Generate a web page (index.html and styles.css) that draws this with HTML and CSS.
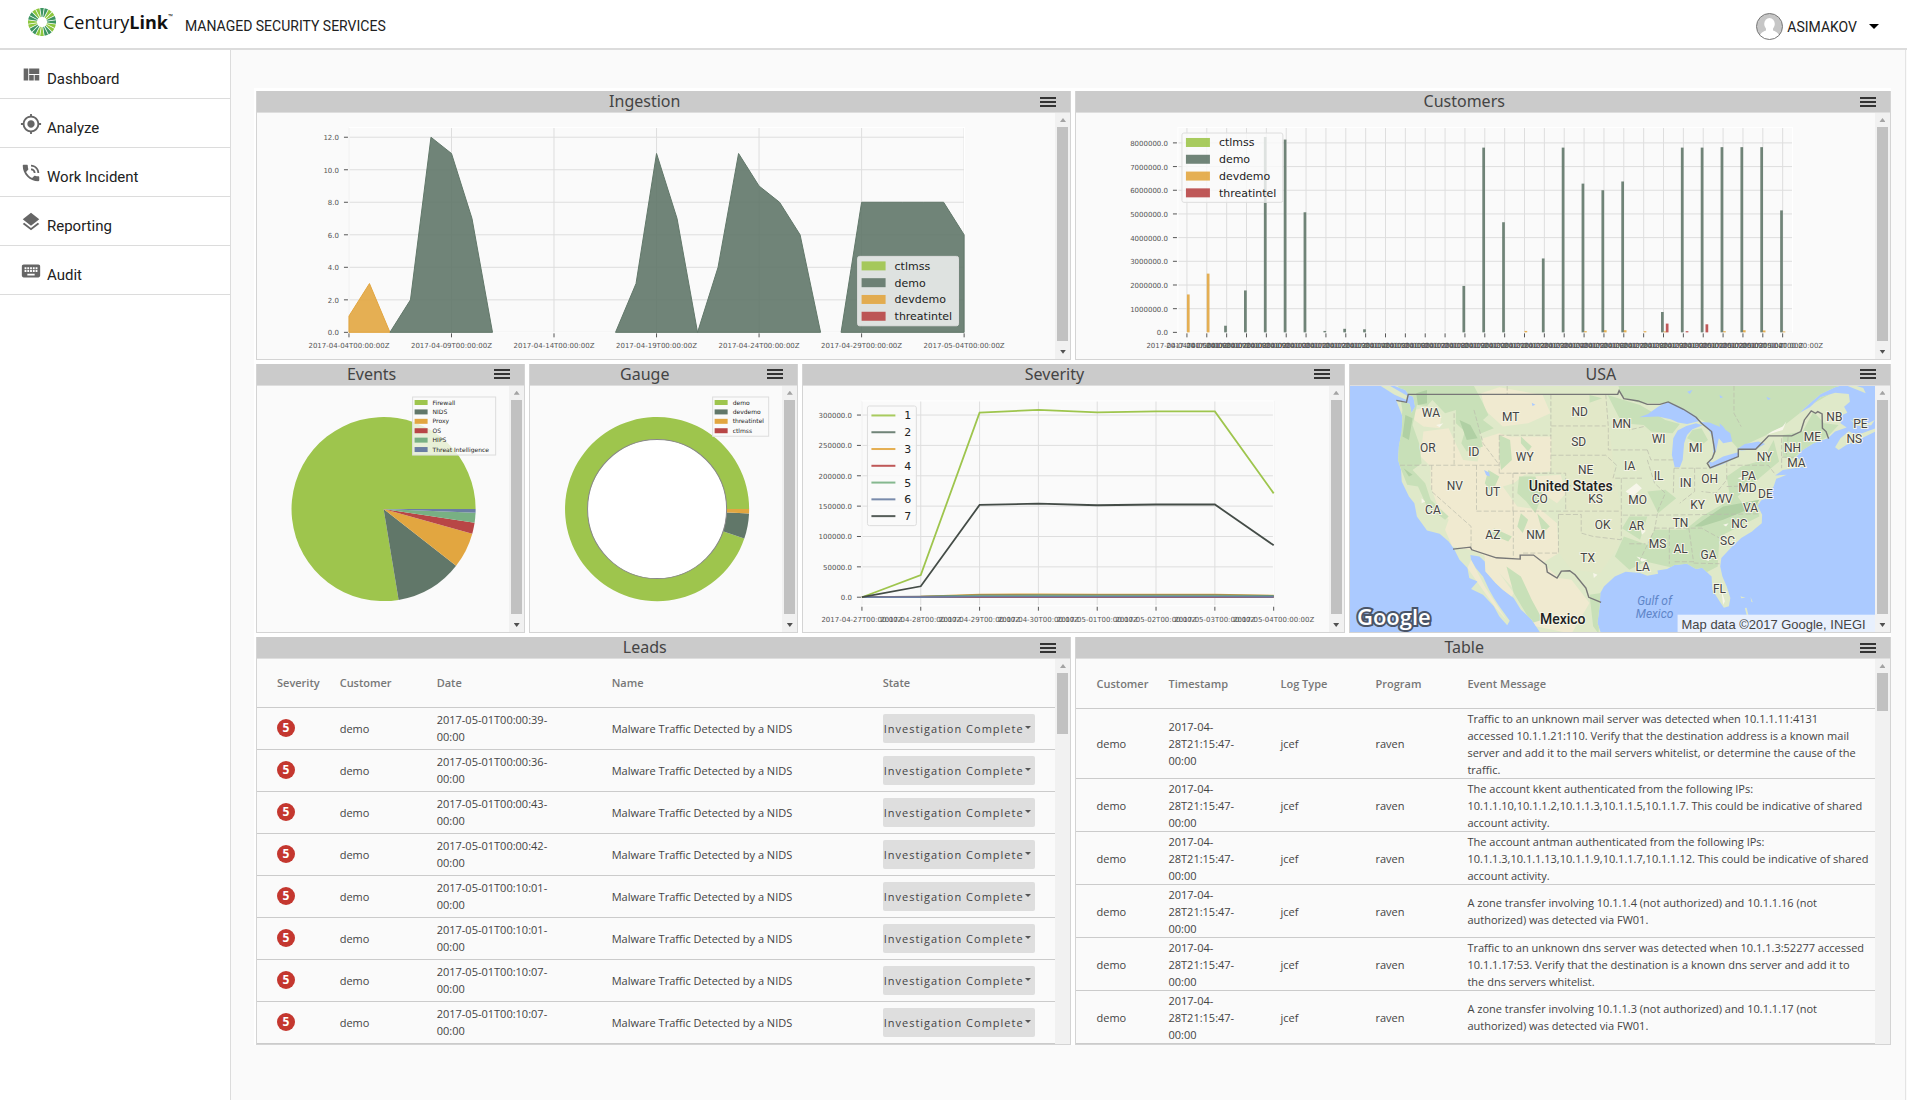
FILE: index.html
```html
<!DOCTYPE html>
<html lang="en">
<head>
  <meta charset="UTF-8">
  <meta name="viewport" content="width=device-width, initial-scale=1.0">
  <title>Managed Security Services</title>
  <link rel="stylesheet" href="styles.css">
</head>
<body>
  <!-- Header -->
  <header class="topbar">
    <a class="brand" href="#">
      <svg class="brand-logo" id="logo" viewBox="0 0 30 30" aria-hidden="true"></svg>
      <span class="brand-name">Century<b>Link</b></span><span class="brand-tm">™</span>
    </a>
    <span class="brand-sub">MANAGED SECURITY SERVICES</span>
    <button class="user" type="button">
      <svg class="avatar" viewBox="0 0 27 27" aria-hidden="true">
        <clipPath id="face"><circle cx="13.5" cy="13.5" r="13"/></clipPath>
        <circle cx="13.5" cy="13.5" r="13" fill="#c6c6c6"/>
        <g clip-path="url(#face)" fill="#fff">
          <ellipse cx="13.5" cy="11" rx="5.3" ry="6"/>
          <path d="M3 27c0-6 3-8 7-9.500v-4h7v4c4 1.500 7 3.500 7 9.500z"/>
        </g>
        <circle cx="13.500" cy="13.500" r="13" fill="none" stroke="#777"/>
      </svg>
      <span>ASIMAKOV</span>
      <svg class="caret" viewBox="0 0 10 5" aria-hidden="true"><path d="M0 0h10L5 5z"/></svg>
    </button>
  </header>

  <div class="page">
    <!-- Sidebar -->
    <nav class="sidebar">
      <a href="#"><svg viewBox="0 0 24 24"><path d="M10 18h5v-6h-5v6zm-6 0h5V5H4v13zm12 0h5v-6h-5v6zM10 5v6h11V5H10z"/></svg><span>Dashboard</span></a>
      <a href="#"><svg viewBox="0 0 24 24"><path d="M12 8c-2.210 0-4 1.790-4 4s1.790 4 4 4 4-1.790 4-4-1.790-4-4-4zm8.940 3c-.46-4.170-3.770-7.480-7.940-7.940V1h-2v2.060C6.830 3.520 3.520 6.830 3.060 11H1v2h2.060c.46 4.170 3.770 7.480 7.940 7.940V23h2v-2.060c4.170-.46 7.480-3.770 7.940-7.940H23v-2h-2.060zM12 19c-3.870 0-7-3.130-7-7s3.130-7 7-7 7 3.130 7 7-3.130 7-7 7z"/></svg><span>Analyze</span></a>
      <a href="#"><svg viewBox="0 0 24 24"><path d="M20 15.500c-1.250 0-2.450-.2-3.570-.57-.35-.11-.74-.03-1.020.24l-2.200 2.200c-2.830-1.440-5.150-3.750-6.590-6.590l2.200-2.200c.28-.28.36-.67.25-1.020C8.700 6.450 8.500 5.250 8.500 4c0-.55-.45-1-1-1H4c-.55 0-1 .45-1 1 0 9.390 7.610 17 17 17 .55 0 1-.45 1-1v-3.500c0-.55-.45-1-1-1zM19 12h2c0-4.970-4.030-9-9-9v2c3.870 0 7 3.130 7 7zm-4 0h2c0-2.760-2.240-5-5-5v2c1.660 0 3 1.340 3 3z"/></svg><span>Work Incident</span></a>
      <a href="#"><svg viewBox="0 0 24 24"><path d="M11.990 18.540l-7.370-5.730L3 14.070l9 7 9-7-1.630-1.270-7.380 5.740zM12 16l7.360-5.730L21 9l-9-7-9 7 1.630 1.270L12 16z"/></svg><span>Reporting</span></a>
      <a href="#"><svg viewBox="0 0 24 24"><path d="M20 5H4c-1.100 0-1.990.9-1.990 2L2 17c0 1.100.9 2 2 2h16c1.100 0 2-.9 2-2V7c0-1.100-.9-2-2-2zm-9 3h2v2h-2V8zm0 3h2v2h-2v-2zM8 8h2v2H8V8zm0 3h2v2H8v-2zm-1 2H5v-2h2v2zm0-3H5V8h2v2zm9 7H8v-2h8v2zm0-4h-2v-2h2v2zm0-3h-2V8h2v2zm3 3h-2v-2h2v2zm0-3h-2V8h2v2z"/></svg><span>Audit</span></a>
    </nav>

    <main class="content">
      <div class="widgets">

        <section class="widget wide">
          <header><h2>Ingestion</h2><button type="button" class="menu" aria-label="Ingestion menu"></button></header>
          <div class="widget-body">
            <svg class="chart" id="ingestion" viewBox="0 0 799 246"></svg>
            <div class="scroll"><i class="up"></i><i class="thumb"></i><i class="down"></i></div>
          </div>
        </section>

        <section class="widget wide">
          <header><h2>Customers</h2><button type="button" class="menu" aria-label="Customers menu"></button></header>
          <div class="widget-body">
            <svg class="chart" id="customers" viewBox="0 0 799 246"></svg>
            <div class="scroll"><i class="up"></i><i class="thumb"></i><i class="down"></i></div>
          </div>
        </section>

        <section class="widget">
          <header><h2>Events</h2><button type="button" class="menu" aria-label="Events menu"></button></header>
          <div class="widget-body">
            <svg class="chart" id="events" viewBox="0 0 252 246"></svg>
            <div class="scroll"><i class="up"></i><i class="thumb"></i><i class="down"></i></div>
          </div>
        </section>

        <section class="widget">
          <header><h2>Gauge</h2><button type="button" class="menu" aria-label="Gauge menu"></button></header>
          <div class="widget-body">
            <svg class="chart" id="gauge" viewBox="0 0 252 246"></svg>
            <div class="scroll"><i class="up"></i><i class="thumb"></i><i class="down"></i></div>
          </div>
        </section>

        <section class="widget medium">
          <header><h2>Severity</h2><button type="button" class="menu" aria-label="Severity menu"></button></header>
          <div class="widget-body">
            <svg class="chart" id="severity" viewBox="0 0 526 246"></svg>
            <div class="scroll"><i class="up"></i><i class="thumb"></i><i class="down"></i></div>
          </div>
        </section>

        <section class="widget medium">
          <header><h2>USA</h2><button type="button" class="menu" aria-label="USA menu"></button></header>
          <div class="widget-body">
            <svg class="chart map" id="usa" viewBox="1 0 526 246">
              <g transform="scale(.3616 .3333) translate(-24 -78)">
                <!-- land -->
                <path class="land" id="land" d="M150 78L180 90L190 105L202 110L207 140L197 160L192 132L183 128L155 122L172 170L170 215L162 260L160 300L168 330L170 365L190 410L205 430L212 470L240 512L275 522L300 545L315 568L330 600L352 625L357 655L380 665L362 688L395 705L425 740L440 770L462 797L469 783L440 740L425 715L412 690L395 650L375 625L362 600L360 586L385 590L400 605L402 635L430 670L450 690L480 715L500 750L530 780L555 822H722L712 790L718 740L720 700L730 680L760 650L790 636L830 640L850 648L880 642L878 632L905 628L925 616L960 612L985 628L1002 624L1028 650L1030 690L1050 725L1062 744L1076 740L1080 715L1070 680L1058 650L1052 620L1055 595L1085 560L1110 535L1140 515L1150 505L1167 490L1168 465L1156 438L1165 422L1180 415L1185 400L1200 380L1207 357L1236 345L1204 347L1225 330L1252 326L1290 318L1275 302L1262 292L1280 270L1310 250L1350 235L1370 215L1402 203L1385 190L1390 165L1404 158L1395 140L1411 125L1408 102L1370 98L1330 112L1300 142L1270 160L1300 130L1330 102L1370 82L1382 78Z"/>
                <path class="land" d="M1370 262L1385 235L1408 214L1430 226L1482 205V215L1445 234L1400 256L1380 270ZM1410 178L1432 198L1470 196L1480 180L1462 190L1430 190ZM1405 78L1455 100L1448 84L1430 78ZM112 78H138L186 108L184 120L150 104ZM975 806L1030 800L1080 812L1100 822H990ZM1120 745L1126 770L1130 766L1125 744ZM1108 710L1122 714L1110 716ZM1136 712L1142 728L1138 726Z"/>
                <clipPath id="landclip"><use href="#land"/></clipPath>
                <g clip-path="url(#landclip)">
                  <!-- desert and plains -->
                  <path class="desert" d="M205 150L245 140L280 165L275 205L230 200L205 180ZM230 215L300 205L315 240L340 300L380 305L395 235L440 220L470 230L585 230L582 335L510 345L480 370L450 380L490 440L555 450L600 490L605 580L560 610L605 655L640 660L690 730L640 822L540 800L490 700L440 640L395 585L360 570L310 560L290 510L300 480L270 440L250 380L250 320L222 290ZM390 100L440 82L560 105L582 160L520 190L450 200L400 150ZM400 590L440 640L480 700L470 720L400 640Z"/>
                  <path class="desert" d="M352 625L362 600L400 680L460 780L430 745ZM530 350L610 345L625 400L600 430L560 400Z"/>
                  <path class="plains" d="M585 105L735 105L745 205L760 350L780 455L770 560L720 640L640 630L605 580L605 460L625 455L625 345L585 335Z"/>
                  <!-- forests -->
                  <path class="forest" d="M160 78H370L395 130L410 165L395 180L425 205L385 222L395 260L350 275L335 250L345 215L320 190L320 150L290 160L255 120L240 138L212 135L200 195L218 250L225 310L200 330L235 370L250 420L300 470L290 480L240 440L215 380L185 375L158 300L165 210L172 150Z"/>
                  <path class="forest" d="M770 78H1400L1360 100L1295 140L1225 200L1180 225L1100 265L1060 215L1000 180L910 130L830 130L780 110Z"/>
                  <path class="forest" d="M740 105L830 135L900 180L940 192L920 220L860 215L840 195L780 190ZM1000 205L1018 240L1000 255L960 235L975 210ZM1225 225L1280 215L1310 155L1340 190L1380 195L1350 230L1275 275L1250 300L1225 290Z"/>
                  <path class="forest" d="M1200 240L1215 305L1160 355L1100 410L1120 440L1160 430L1160 470L1050 530L1045 620L1010 640L905 620L845 605L800 630L760 590L785 530L850 555L870 510L955 510L1000 470L1080 420L1070 350L1110 320L1170 300ZM780 505L800 470L850 470L830 540ZM850 395L900 390L930 415L880 460Z"/>
                  <path class="forest" d="M440 225L470 240L475 300L445 330L440 290ZM500 230L530 260L520 275L500 250ZM495 350L540 350L560 400L540 460L515 425L490 400ZM410 330L440 350L420 400L400 370ZM500 460L520 480L505 520L490 500ZM545 460L580 500L560 520ZM425 505L475 530L465 545L420 525ZM460 620L500 650L530 720L560 780L530 790L480 700ZM690 705L722 700L715 822L700 800ZM690 105L725 115L690 128Z"/>
                  <path class="mountain" d="M980 500L1060 440L1160 420L1150 440L1060 480L1000 500ZM210 100L240 90L240 130L215 135ZM330 180L360 195L380 235L350 240ZM180 165L200 175L190 240L172 230ZM175 325L200 345L190 350Z"/>
                  <!-- towns -->
                  <path class="town" d="M790 395L820 370L835 385L810 410ZM830 500L845 515L835 525ZM1195 215L1225 200L1235 185L1225 210L1180 225ZM1100 355L1115 350L1112 360ZM265 195L285 190L275 202ZM225 415L235 425L225 430ZM700 640L712 645L702 655ZM1055 690L1065 725L1060 735ZM955 210L966 205L960 215ZM1060 495L1075 490L1068 500ZM1010 600L1025 590L1020 604ZM820 590L850 600L835 606ZM580 770L600 780L590 790Z"/>
                </g>
                <!-- lakes -->
                <path class="water" d="M828 172L852 162L880 140L905 126L930 135L970 158L988 172L992 184L960 192L935 188L915 178L880 170ZM918 285L922 235L934 212L958 198L985 190L1003 196L975 208L960 225L952 250L948 300L940 322L926 322ZM998 186L1022 188L1060 205L1080 220L1085 245L1060 250L1048 235L1040 275L1032 280L1035 240L1020 210ZM1020 305L1030 308L1060 290L1104 276L1098 292L1060 312L1026 326ZM1098 268L1120 252L1158 245L1176 252L1150 268L1110 272ZM398 330L412 338L414 350L404 346ZM1050 190L1060 200L1070 215L1052 205ZM1050 105L1060 112L1052 114ZM1180 110L1192 116L1184 120ZM960 95L975 90L968 102ZM530 128L540 134L532 138Z"/>
                <!-- state lines -->
                <path class="state" d="M315 160V315M165 316H440M440 226V340M440 226H584M583 104V340M584 198H735M584 286H735L765 316L755 355H840M735 104L742 200L742 270H850M440 340H584M478 340V454M478 340H624V454M253 316V395L362 500L362 565M377 316V454M377 454H778M479 454V596M604 464V580H500M604 464H667V520L700 530L778 540M778 355V540M625 378H765M850 270L860 300H922M850 300L870 370L900 400L880 450L870 510L850 555L830 600M782 466H890L1160 462M800 552H845M870 505H1000L1050 535M911 505V612M965 505L978 606H925M978 610L1050 612M924 325L922 400M981 325V395L940 430M924 325H1015M1070 305V360L1040 400L1000 395M1070 380L1130 378M1080 316H1185L1205 345M1222 235L1222 325M1240 230L1235 290M1222 292H1262M370 150L395 250L440 315M840 200L800 210M462 78V104M1090 78V160L1110 200"/>
                <!-- national borders -->
                <path class="border" d="M155 121L183 127L188 103H768L772 92L785 116L825 123L850 133L885 133L908 126L950 148L985 172L1000 190L1028 215L1037 275L1030 295L1016 310L1024 324L1102 290L1102 268H1150L1186 228H1250L1275 215L1285 180L1304 153L1316 160L1322 155L1334 162L1335 205L1345 215L1352 236M312 568L360 562L364 570L432 594L498 598V586H535L570 615L573 637L600 655L612 634L635 633L650 645L680 685L688 713L722 728"/>
              </g>
              <g id="map-labels"></g>
              <text class="gulf" x="306" y="219">Gulf of<tspan x="306" y="232">Mexico</tspan></text>
              <text class="google" x="8" y="239">Google</text>
              <rect class="credit-bg" x="329" y="229" width="198" height="18"/>
              <text class="credit" x="333" y="243">Map data ©2017 Google, INEGI</text>
            </svg>
            <div class="scroll"><i class="up"></i><i class="thumb"></i><i class="down"></i></div>
          </div>
        </section>

        <section class="widget wide">
          <header><h2>Leads</h2><button type="button" class="menu" aria-label="Leads menu"></button></header>
          <div class="widget-body tall">
            <table class="leads">
              <thead>
                <tr><th>Severity</th><th>Customer</th><th>Date</th><th>Name</th><th>State</th></tr>
              </thead>
              <tbody>
                <tr><td><b class="badge">5</b></td><td>demo</td><td>2017-05-01T00:00:39-<wbr>00:00</td><td>Malware Traffic Detected by a NIDS</td><td><select aria-label="State"><option>Investigation Complete</option></select></td></tr>
                <tr><td><b class="badge">5</b></td><td>demo</td><td>2017-05-01T00:00:36-<wbr>00:00</td><td>Malware Traffic Detected by a NIDS</td><td><select aria-label="State"><option>Investigation Complete</option></select></td></tr>
                <tr><td><b class="badge">5</b></td><td>demo</td><td>2017-05-01T00:00:43-<wbr>00:00</td><td>Malware Traffic Detected by a NIDS</td><td><select aria-label="State"><option>Investigation Complete</option></select></td></tr>
                <tr><td><b class="badge">5</b></td><td>demo</td><td>2017-05-01T00:00:42-<wbr>00:00</td><td>Malware Traffic Detected by a NIDS</td><td><select aria-label="State"><option>Investigation Complete</option></select></td></tr>
                <tr><td><b class="badge">5</b></td><td>demo</td><td>2017-05-01T00:10:01-<wbr>00:00</td><td>Malware Traffic Detected by a NIDS</td><td><select aria-label="State"><option>Investigation Complete</option></select></td></tr>
                <tr><td><b class="badge">5</b></td><td>demo</td><td>2017-05-01T00:10:01-<wbr>00:00</td><td>Malware Traffic Detected by a NIDS</td><td><select aria-label="State"><option>Investigation Complete</option></select></td></tr>
                <tr><td><b class="badge">5</b></td><td>demo</td><td>2017-05-01T00:10:07-<wbr>00:00</td><td>Malware Traffic Detected by a NIDS</td><td><select aria-label="State"><option>Investigation Complete</option></select></td></tr>
                <tr><td><b class="badge">5</b></td><td>demo</td><td>2017-05-01T00:10:07-<wbr>00:00</td><td>Malware Traffic Detected by a NIDS</td><td><select aria-label="State"><option>Investigation Complete</option></select></td></tr>
              </tbody>
            </table>
            <div class="scroll"><i class="up"></i><i class="thumb leads-thumb"></i></div>
          </div>
        </section>

        <section class="widget wide">
          <header><h2>Table</h2><button type="button" class="menu" aria-label="Table menu"></button></header>
          <div class="widget-body tall">
            <table class="events">
              <thead>
                <tr><th>Customer</th><th>Timestamp</th><th>Log Type</th><th>Program</th><th>Event Message</th></tr>
              </thead>
              <tbody>
                <tr><td>demo</td><td>2017-04-<wbr>28T21:15:47-<wbr>00:00</td><td>jcef</td><td>raven</td><td>Traffic to an unknown mail server was detected when 10.1.1.11:4131<br>accessed 10.1.1.21:110. Verify that the destination address is a known mail server and add it to the mail servers whitelist, or determine the cause of the traffic.</td></tr>
                <tr><td>demo</td><td>2017-04-<wbr>28T21:15:47-<wbr>00:00</td><td>jcef</td><td>raven</td><td>The account kkent authenticated from the following IPs: 10.1.1.10,10.1.1.2,10.1.1.3,10.1.1.5,10.1.1.7. This could be indicative of shared account activity.</td></tr>
                <tr><td>demo</td><td>2017-04-<wbr>28T21:15:47-<wbr>00:00</td><td>jcef</td><td>raven</td><td>The account antman authenticated from the following IPs: 10.1.1.3,10.1.1.13,10.1.1.9,10.1.1.7,10.1.1.12. This could be indicative of shared account activity.</td></tr>
                <tr><td>demo</td><td>2017-04-<wbr>28T21:15:47-<wbr>00:00</td><td>jcef</td><td>raven</td><td>A zone transfer involving 10.1.1.4 (not authorized) and 10.1.1.16 (not authorized) was detected via FW01.</td></tr>
                <tr><td>demo</td><td>2017-04-<wbr>28T21:15:47-<wbr>00:00</td><td>jcef</td><td>raven</td><td>Traffic to an unknown dns server was detected when 10.1.1.3:52277 accessed 10.1.1.17:53. Verify that the destination is a known dns server and add it to<br>the dns servers whitelist.</td></tr>
                <tr><td>demo</td><td>2017-04-<wbr>28T21:15:47-<wbr>00:00</td><td>jcef</td><td>raven</td><td>A zone transfer involving 10.1.1.3 (not authorized) and 10.1.1.17 (not authorized) was detected via FW01.</td></tr>
              </tbody>
            </table>
            <div class="scroll"><i class="up"></i><i class="thumb table-thumb"></i></div>
          </div>
        </section>

      </div>
    </main>
  </div>

  <script src="charts.js"></script>
</body>
</html>
```

FILE: styles.css
```css
* {
  box-sizing: border-box;
}
body {
  font-family: Roboto, sans-serif;
  margin: 0;
  min-height: 100vh;
  display: flex;
  flex-direction: column;
  background-color: #fafafa;
  color: #212121;
}

/* Header */
.topbar {
  display: flex;
  align-items: center;
  height: 50px;
  padding: 0 28px 4px 27px;
  background: #fff;
  border-bottom: 2px solid #dcdcdc;
}
.brand {
  display: flex;
  align-items: center;
  color: #111;
  text-decoration: none;
}
.brand-logo {
  width: 30px;
  height: 30px;
  margin-right: 6px;
}
.brand-name {
  font-family: "Open Sans", sans-serif;
  font-size: 18px;
}
.brand-tm {
  font-size: 8px;
  align-self: flex-start;
  margin-top: 6px;
}
.brand-sub {
  font-size: 14px;
  margin: 8px 0 0 12px;
}
.user {
  display: flex;
  align-items: center;
  margin: 9px 0 0 auto;
  padding: 0;
  border: none;
  background: none;
  font-family: inherit;
  font-size: 14px;
  color: #212121;
  cursor: pointer;
}
.avatar {
  width: 27px;
  height: 27px;
  margin-right: 4px;
}
.caret {
  width: 10px;
  height: 5px;
  margin-left: 12px;
}

.page {
  display: flex;
  flex: 1;
}

/* Sidebar */
.sidebar {
  width: 231px;
  flex-shrink: 0;
  background: #fff;
  border-right: 1px solid #dcdcdc;
}
.sidebar a {
  display: flex;
  align-items: flex-end;
  height: 49px;
  padding: 0 0 10px 20px;
  border-bottom: 1px solid #dcdcdc;
  color: #212121;
  font-size: 15px;
  line-height: 18px;
  text-decoration: none;
}
.sidebar svg {
  width: 22px;
  height: 22px;
  margin: 0 5px 2px 0;
  fill: #666;
}

/* Widgets */
.content {
  flex: 1;
  min-width: 0;
  margin-right: 1px;
  padding: 38px 14px 40px 23px;
  border-right: 1px solid #e4e4e4;
}
.widgets {
  display: grid;
  grid-template-columns: repeat(6, minmax(0, 1fr));
  gap: 4px;
  padding: 3px 0 0 2px;
  background: #fff;
}
.widget {
  display: flex;
  flex-direction: column;
  background: #fafafa;
  border: 1px solid #d4d4d4;
  border-top: none;
}
.widget.medium {
  grid-column: span 2;
}
.widget.wide {
  grid-column: span 3;
}
.widget header {
  display: flex;
  align-items: center;
  height: 22px;
  padding-right: 14px;
  background: #cbcbcb;
  border-bottom: 1px solid #dedede;
}
.widget h2 {
  flex: 1;
  margin: 0;
  font-family: "Noto Sans", sans-serif;
  font-size: 16px;
  font-weight: 400;
  line-height: 21px;
  text-align: center;
  color: #444;
}
.menu {
  width: 24px;
  height: 18px;
  padding: 4px 0 4px 8px;
  border: none;
  background: linear-gradient(#333 2px, transparent 2px 4px, #333 4px 6px, transparent 6px 8px, #333 8px) content-box;
  cursor: pointer;
}
.widget-body {
  display: flex;
  flex: 1;
  align-items: flex-start;
}
.widget-body.tall {
  height: 388px;
  overflow: hidden;
}
.chart {
  flex: 1;
  min-width: 0;
  display: block;
}

/* Scrollbars */
.scroll {
  display: flex;
  flex-direction: column;
  align-items: center;
  align-self: stretch;
  width: 15px;
  flex-shrink: 0;
  background: #f1f1f1;
}
.up,
.down {
  width: 6px;
  height: 4px;
  margin: 5px 0;
  background: #a3a3a3;
  clip-path: polygon(0 100%, 50% 0, 100% 100%);
}
.down {
  background: #505050;
  clip-path: polygon(0 0, 100% 0, 50% 100%);
}
.thumb {
  width: 11px;
  flex: 1;
  margin-bottom: 4px;
  background: #c1c1c1;
}
.leads-thumb {
  flex: none;
  height: 61px;
}
.table-thumb {
  flex: none;
  height: 38px;
}

/* Tables */
table {
  flex: 1;
  min-width: 0;
  table-layout: fixed;
  border-collapse: collapse;
  font-family: "Open Sans", sans-serif;
  font-size: 11px;
  line-height: 17px;
  color: #444;
}
th {
  height: 49px;
  padding: 0 0 0 20px;
  border-bottom: 1px solid #cbcbcb;
  font-weight: 600;
  text-align: left;
  color: #777;
}
td {
  height: 42px;
  padding: 0 20px;
  border-bottom: 1px solid #cbcbcb;
}
.leads th {
  height: 48px;
}
.leads th:nth-child(1) { width: 62px; }
.leads th:nth-child(2) { width: 97px; }
.leads th:nth-child(3) { width: 175px; }
.leads th:nth-child(4) { width: 271px; }
.leads td:nth-child(4) { padding-right: 0; }
.events th:nth-child(1) { width: 69px; }
.events th:nth-child(2) { width: 112px; }
.events th:nth-child(3) { width: 95px; }
.events th:nth-child(4) { width: 92px; }
.events td {
  height: 53px;
  padding-top: 1px;
}
.events td:last-child {
  padding-right: 0;
}
.badge {
  display: block;
  width: 18px;
  height: 18px;
  border-radius: 50%;
  background: #c4372f;
  color: #fff;
  font-size: 12px;
  line-height: 18px;
  text-align: center;
}
select {
  display: block;
  width: 100%;
  height: 29px;
  padding: 0 1px;
  appearance: none;
  border: none;
  border-radius: 2px;
  background: #dedede url("data:image/svg+xml,%3Csvg xmlns='http://www.w3.org/2000/svg' width='6' height='4'%3E%3Cpath d='M0 0h6L3 3z' fill='%23555'/%3E%3C/svg%3E") no-repeat right 4px center;
  font-family: inherit;
  font-size: 11px;
  letter-spacing: 1px;
  color: #444;
}

/* Charts */
.chart text {
  font-family: "DejaVu Sans", sans-serif;
  font-size: 7px;
  fill: #555;
}
.chart .key {
  font-size: 11px;
  fill: #222;
}
.chart .key-small {
  font-size: 6px;
  fill: #222;
}
.frame {
  fill: none;
  stroke: #fff;
}
.grid {
  stroke: #dedede;
}
.tick {
  stroke: #555;
}

/* Map */
.map {
  background: #abcaff;
}
.land { fill: #dfe9c9; }
.desert { fill: #f0ead0; }
.plains { fill: #e2e8c8; }
.forest { fill: #c8e0b8; }
.mountain { fill: #b0d0a4; }
.town { fill: #f7f6ea; }
.water { fill: #abcaff; }
.state {
  fill: none;
  stroke: #b9bbab;
  stroke-width: 2;
  stroke-dasharray: 14 6;
}
.border {
  fill: none;
  stroke: #777;
  stroke-width: 4;
}
.map text {
  font-family: Roboto, sans-serif;
  font-size: 12px;
  fill: #444;
  stroke: #f4f4e6;
  stroke-width: 2px;
  paint-order: stroke;
}
.map .country {
  font-size: 14px;
  font-weight: 500;
  fill: #222;
}
.map .gulf {
  font-style: italic;
  text-anchor: middle;
  fill: #5f86c9;
  stroke: none;
}
.map .google {
  font-family: "Open Sans", sans-serif;
  font-size: 22px;
  font-weight: 600;
  fill: #fff;
  stroke: #4a5568;
  stroke-width: 4px;
}
.credit-bg {
  fill: #e8f0fd;
}
.map .credit {
  font-family: "Liberation Sans", sans-serif;
  font-size: 13px;
  fill: #444;
  stroke: none;
}
```

FILE: charts.js
```js
const NS = 'http://www.w3.org/2000/svg';
const COLORS = ['#9ec54d', '#617769', '#e2a640', '#b84646', '#78b083', '#6a7ea3', '#444c47'];

function add(parent, tag, attrs, text) {
  const el = document.createElementNS(NS, tag);
  for (const name in attrs) el.setAttribute(name, attrs[name]);
  if (text !== undefined) el.textContent = text;
  parent.appendChild(el);
  return el;
}

function line(svg, x1, y1, x2, y2, cls) {
  add(svg, 'line', { x1, y1, x2, y2, class: cls });
}

// "2017-04-04" plus a number of days
function stamp(start, days) {
  const date = new Date(start + 'T00:00:00Z');
  date.setUTCDate(date.getUTCDate() + days);
  return date.toISOString().slice(0, 10) + 'T00:00:00Z';
}

// a: left, right, top, bottom (frame), base (y of zero), unit, yTicks, xTicks
function axes(svg, a) {
  a.xTicks.forEach(t => {
    line(svg, t.x, a.top, t.x, a.bottom, 'grid');
    line(svg, t.x, a.bottom + 1, t.x, a.bottom + 5, 'tick');
    add(svg, 'text', { x: t.x, y: a.bottom + 16, 'text-anchor': 'middle' }, t.label);
  });
  a.yTicks.forEach(v => {
    const y = a.base - v * a.unit;
    line(svg, a.left, y, a.right, y, 'grid');
    line(svg, a.left - 5, y, a.left - 1, y, 'tick');
    add(svg, 'text', { x: a.left - 10, y: y + 3, 'text-anchor': 'end' }, v.toFixed(1));
  });
  add(svg, 'rect', { x: a.left, y: a.top, width: a.right - a.left, height: a.bottom - a.top, class: 'frame' });
}

function legend(svg, x, y, width, names, opt) {
  const small = opt.small;
  const step = small ? 9.4 : 16.8;
  const pad = small ? 5.5 : 9.5;
  add(svg, 'rect', { x, y, width, height: pad * 2 + step * (names.length - 1), rx: small ? 0 : 2,
    fill: '#fafafa', 'fill-opacity': 0.8, stroke: '#ddd' });
  names.forEach((name, i) => {
    const cy = y + pad + i * step;
    const h = opt.line ? 2 : small ? 5 : 9;
    add(svg, 'rect', { x: x + (small ? 2 : 4), y: cy - h / 2, width: small ? 13 : 24, height: h,
      fill: COLORS[i], 'fill-opacity': small ? 1 : 0.9 });
    add(svg, 'text', { x: x + (small ? 20 : 37), y: cy + (small ? 2 : 4), class: small ? 'key-small' : 'key' }, name);
  });
}

// Ingestion
(function () {
  const svg = document.getElementById('ingestion');
  const x = d => 92 + d * 20.52;
  const y = v => 219.5 - v * 16.27;
  axes(svg, {
    left: 92, right: 708, top: 14.5, bottom: 219.5, base: 219.5, unit: 16.27,
    yTicks: [0, 2, 4, 6, 8, 10, 12],
    xTicks: [0, 5, 10, 15, 20, 25, 30].map(d => ({ x: x(d), label: stamp('2017-04-04', d) }))
  });
  const areas = [
    { color: COLORS[2], from: 0, values: [1, 3, 0] },
    { color: COLORS[1], from: 2, values: [0, 2, 12, 11, 7, 0] },
    { color: COLORS[1], from: 13, values: [0, 3, 11, 7, 0, 4, 11, 9, 8, 6, 0] },
    { color: COLORS[1], from: 24, values: [0, 8, 8, 8, 8, 8, 6] }
  ];
  areas.forEach(a => {
    const pts = a.values.map((v, i) => x(a.from + i) + ',' + y(v));
    pts.unshift(x(a.from) + ',' + y(0));
    pts.push(x(a.from + a.values.length - 1) + ',' + y(0));
    add(svg, 'polygon', { points: pts.join(' '), fill: a.color, 'fill-opacity': 0.9, stroke: a.color });
  });
  legend(svg, 601, 143.5, 101, ['ctlmss', 'demo', 'devdemo', 'threatintel'], {});
})();

// Customers, values in millions
(function () {
  const svg = document.getElementById('customers');
  const x = d => 111 + d * 19.87;
  const ticks = [];
  for (let d = 0; d <= 30; d++) ticks.push({ x: x(d), label: stamp('2017-04-04', d) });
  axes(svg, {
    left: 102, right: 717, top: 14.5, bottom: 219.5, base: 219.5, unit: 23.7 / 1000000,
    yTicks: [0, 1, 2, 3, 4, 5, 6, 7, 8].map(v => v * 1000000),
    xTicks: ticks
  });
  const demo = { 2: 0.28, 3: 1.77, 4: 8.25, 5: 8.14, 6: 5.07, 7: 0.06, 8: 0.15, 9: 0.13, 14: 1.96, 15: 7.8,
    16: 4.65, 18: 3.12, 19: 7.8, 20: 6.28, 21: 6, 22: 6.37, 24: 0.86, 25: 7.8, 26: 7.8, 27: 7.82, 28: 7.82,
    29: 7.82, 30: 5.15 };
  const devdemo = { 0: 1.6, 1: 2.48, 17: 0.06, 20: 0.05, 21: 0.09, 22: 0.09, 23: 0.05, 24: 0.04, 27: 0.05,
    28: 0.09, 29: 0.08, 30: 0.04 };
  const threatintel = { 24: 0.37, 25: 0.05, 26: 0.34 };
  [[demo, 1, -2.5], [devdemo, 2, 0], [threatintel, 3, 2.3]].forEach(([values, color, dx]) => {
    for (const d in values) {
      const h = values[d] * 23.7;
      add(svg, 'rect', { x: x(+d) + dx, y: 219.5 - h, width: 2.7, height: h, fill: COLORS[color], 'fill-opacity': 0.9 });
    }
  });
  legend(svg, 106, 20, 101, ['ctlmss', 'demo', 'devdemo', 'threatintel'], {});
})();

// Pie slices, angles in degrees clockwise from 3 o'clock
function pie(svg, cx, cy, r, slices) {
  slices.forEach(([from, to, color]) => {
    const p = a => (cx + r * Math.cos(a * Math.PI / 180)) + ' ' + (cy + r * Math.sin(a * Math.PI / 180));
    const large = to - from > 180 ? 1 : 0;
    add(svg, 'path', { d: `M${cx} ${cy}L${p(from)}A${r} ${r} 0 ${large} 1 ${p(to)}Z`, fill: COLORS[color] });
  });
}

// Events
(function () {
  const svg = document.getElementById('events');
  pie(svg, 126.5, 123, 92, [[80.6, 360, 0], [38, 80.6, 1], [15.5, 38, 2], [8.6, 15.5, 3], [2.3, 8.6, 4], [0, 2.3, 5]]);
  legend(svg, 155.5, 11, 83, ['Firewall', 'NIDS', 'Proxy', 'OS', 'HIPS', 'Threat Intelligence'], { small: true });
})();

// Gauge
(function () {
  const svg = document.getElementById('gauge');
  pie(svg, 127, 123, 92, [[18.7, 360, 0], [2.7, 18.7, 1], [0, 2.7, 2]]);
  add(svg, 'circle', { cx: 127, cy: 123, r: 69.5, fill: '#fff', stroke: '#888' });
  legend(svg, 182.5, 11, 56, ['demo', 'devdemo', 'threatintel', 'ctlmss'], { small: true });
})();

// Severity
(function () {
  const svg = document.getElementById('severity');
  const x = d => 59 + d * 58.9;
  const unit = 30.4 / 50000;
  const ticks = [];
  for (let d = 0; d < 8; d++) ticks.push({ x: x(d), label: stamp('2017-04-27', d) });
  axes(svg, {
    left: 59, right: 471, top: 15, bottom: 220, base: 211.5, unit,
    yTicks: [0, 50000, 100000, 150000, 200000, 250000, 300000],
    xTicks: ticks
  });
  const series = [
    [0, 36500, 304000, 308500, 304500, 306000, 306000, 171000],
    [0, 800, 3000, 3200, 3000, 3100, 3100, 2000],
    [0, 1000, 4300, 4600, 4300, 4400, 4400, 2600],
    [0, 0, 0, 0, 0, 0, 0, 0],
    [0, 700, 2200, 2400, 2200, 2300, 2300, 1500],
    [0, 300, 900, 900, 900, 900, 900, 600],
    [0, 18000, 152000, 154000, 151500, 152700, 152700, 85500]
  ];
  [2, 1, 4, 3, 5, 0, 6].forEach(s => {
    const pts = series[s].map((v, i) => x(i) + ',' + (211.5 - v * unit)).join(' ');
    add(svg, 'polyline', { points: pts, fill: 'none', stroke: COLORS[s], 'stroke-width': 1.8 });
  });
  legend(svg, 64.5, 20, 49, ['1', '2', '3', '4', '5', '6', '7'], { line: true });
})();

// State labels on the map
(function () {
  const group = document.getElementById('map-labels');
  const states = {
    WA: [82, 31], OR: [79, 66], CA: [84, 128], NV: [106, 104], ID: [125, 70], MT: [162, 35], WY: [176, 75],
    UT: [144, 110], CO: [191, 117], AZ: [144, 153], NM: [187, 153], ND: [231, 30], SD: [230, 60], NE: [237, 88],
    KS: [247, 117], OK: [254, 143], TX: [239, 176], MN: [273, 42], IA: [281, 84], MO: [289, 118], AR: [288, 144],
    LA: [294, 185], WI: [310, 57], IL: [310, 94], MS: [309, 162], MI: [347, 66], IN: [337, 101], OH: [361, 97],
    KY: [349, 123], TN: [332, 141], AL: [332, 167], GA: [360, 173], FL: [371, 207], SC: [379, 159], NC: [391, 142],
    VA: [402, 126], WV: [375, 117], MD: [399, 106], DE: [417, 112], PA: [400, 94], NY: [416, 75], NH: [444, 66],
    MA: [448, 81], ME: [464, 55], NB: [486, 35], PE: [512, 42], NS: [506, 57]
  };
  for (const name in states) {
    add(group, 'text', { x: states[name][0], y: states[name][1], 'text-anchor': 'middle' }, name);
  }
  add(group, 'text', { x: 222, y: 105, 'text-anchor': 'middle', class: 'country' }, 'United States');
  add(group, 'text', { x: 214, y: 238, 'text-anchor': 'middle', class: 'country' }, 'Mexico');
})();

// Logo rays
(function () {
  const svg = document.getElementById('logo');
  for (let i = 0; i < 20; i++) {
    add(svg, 'path', { d: 'M14.6 10L13.200 1h3.600L15.400 10z', transform: `rotate(${i * 18} 15 15)`,
      fill: Math.floor(i / 2) % 2 ? '#8cc63f' : '#3d9560' });
  }
})();
```
